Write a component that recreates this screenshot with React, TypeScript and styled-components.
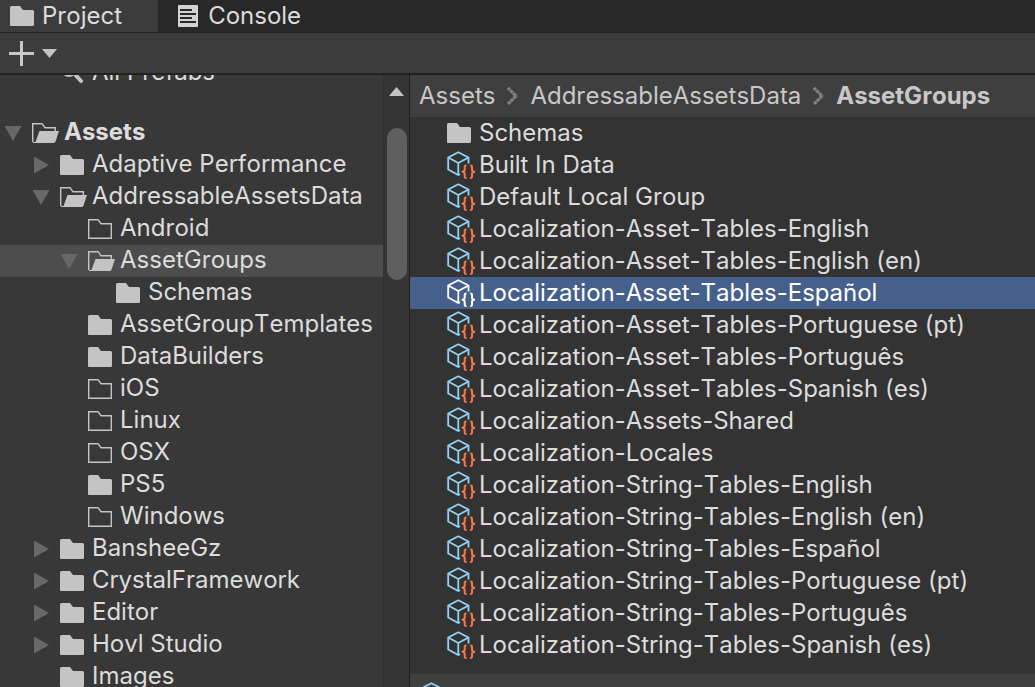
import React from "react";
import styled, { createGlobalStyle } from "styled-components";

const GlobalStyle = createGlobalStyle`
  *, *::before, *::after { box-sizing: border-box; }
  body {
    margin: 0;
    background: #383838;
    color: #dcdcdc;
    font-family: Inter, "Liberation Sans", sans-serif;
    font-size: 24px;
    font-weight: 400;
    line-height: 32px;
    font-optical-sizing: none;
    font-kerning: none;
  }
  button { font: inherit; font-optical-sizing: none; font-kerning: none; color: inherit; border: 0; padding: 0; background: none; text-align: left; }
  ul { list-style: none; margin: 0; padding: 0; }
  svg { display: block; flex: none; }
`;

const Window = styled.div`
  height: 100vh;
  display: flex;
  flex-direction: column;
  overflow: hidden;
`;

const TabBar = styled.div`
  flex: none;
  display: flex;
  height: 33px;
  background: #282828;
  border-bottom: 1px solid #242424;
`;

const Tab = styled.button<{ $active?: boolean }>`
  display: flex;
  align-items: center;
  gap: ${(p) => (p.$active ? 8 : 10)}px;
  padding: 0 36px 0 ${(p) => (p.$active ? 10 : 20)}px;
  background: ${(p) => (p.$active ? "#3c3c3c" : "transparent")};
`;

const Toolbar = styled.div`
  flex: none;
  display: flex;
  align-items: center;
  height: 42px;
  padding: 0 9px;
  background: #3c3c3c;
  border-bottom: 2px solid #212121;
`;

const AddButton = styled.button`
  display: flex;
  align-items: center;
  gap: 8px;
`;

const Panels = styled.div`
  flex: 1;
  min-height: 0;
  display: grid;
  grid-template-columns: 383px 27px minmax(0, 1fr);
`;

const TreePanel = styled.nav`
  overflow: hidden;
`;

const SavedSearches = styled.ul`
  margin-top: -18px;
  padding-bottom: 28px;
`;

const TreeRow = styled.button<{ $depth: number; $selected?: boolean; $strong?: boolean }>`
  display: flex;
  align-items: center;
  width: 100%;
  height: 32px;
  padding-left: ${(p) => p.$depth * 28 + 4}px;
  padding-bottom: 2px;
  background: ${(p) => (p.$selected ? "#4d4d4d" : "transparent")};
  font-weight: ${(p) => (p.$strong ? 700 : 400)};
  white-space: nowrap;
`;

const ArrowSlot = styled.span`
  flex: none;
  width: 28px;
  padding-top: 2px;
`;

const IconSlot = styled.span`
  flex: none;
  width: 32px;
  padding-top: 2px;
`;

const ScrollTrack = styled.div`
  display: flex;
  flex-direction: column;
  align-items: center;
  gap: 32px;
  padding-top: 12px;
  background: #353535;
  border-left: 1px solid #323232;
  border-right: 1px solid #1f1f1f;
`;

const ScrollThumb = styled.div`
  width: 20px;
  height: 152px;
  border-radius: 10px;
  background: #5f5f5f;
`;

const ListPanel = styled.main`
  display: flex;
  flex-direction: column;
  min-height: 0;
  overflow: hidden;
  background: #333333;
`;

const Breadcrumb = styled.nav`
  flex: none;
  display: flex;
  align-items: center;
  gap: 11px;
  height: 42px;
  padding-left: 9px;
  background: #3f3f3f;
  color: #c8c8c8;
  white-space: nowrap;
`;

const Crumb = styled.a<{ $current?: boolean }>`
  color: inherit;
  text-decoration: none;
  font-weight: ${(p) => (p.$current ? 700 : 400)};
`;

const FileList = styled.ul`
  flex: none;
`;

const FileRow = styled.button<{ $selected?: boolean }>`
  display: flex;
  align-items: center;
  width: 100%;
  height: 32px;
  padding-left: 37px;
  gap: 3px;
  background: ${(p) => (p.$selected ? "#46608c" : "transparent")};
  color: ${(p) => (p.$selected ? "#ffffff" : "inherit")};
  white-space: nowrap;
`;

const FileIcon = styled.span`
  flex: none;
  width: 29px;
`;

const StatusBar = styled.footer`
  flex: none;
  display: flex;
  align-items: center;
  gap: 3px;
  height: 44px;
  margin-top: 13px;
  padding-left: 10px;
  background: #3f3f3f;
  white-space: nowrap;
`;

const StatusPath = styled.span`
  padding-top: 2px;
`;

type FolderKind = "full" | "empty" | "open";

function Folder({ kind }: { kind: FolderKind }) {
  if (kind === "full") {
    return (
      <svg width="24" height="20" viewBox="0 0 24 20" fill="#c4c4c4">
        <path d="M0 19V1.500Q0 0 1.500 0H10L13 4H22.500Q24 4 24 5.500V18.500Q24 20 22.500 20H1Q0 20 0 19Z" />
      </svg>
    );
  }
  if (kind === "empty") {
    return (
      <svg width="24" height="20" viewBox="0 0 24 20" fill="none" stroke="#c4c4c4" strokeWidth="1.4">
        <path d="M.7 19.300V.7H10L13 4.700H23.300V19.300Z" />
      </svg>
    );
  }
  return (
    <svg width="28" height="20" viewBox="0 0 28 20">
      <path d="M.7 19V.7H10L13 4.700H23.300V8" fill="none" stroke="#c4c4c4" strokeWidth="1.4" />
      <path d="M7.500 8H27L23.500 18.500Q23 20 21.500 20H1V19H3.500Z" fill="#c4c4c4" />
    </svg>
  );
}

function AssetIcon({ selected }: { selected?: boolean }) {
  const cube = selected ? "#ffffff" : "#8fd3f7";
  const braces = selected ? "#ffffff" : "#ff7548";
  return (
    <svg width="29" height="28" viewBox="0 0 29 28" fill="none" strokeLinejoin="round">
      <path d="M21.500 12.500V6.500L11.300 1.200 1.200 6.500V18.500L11.300 24 13 23.200M1.200 6.500 11.300 12 21.500 6.500M11.300 12V24" stroke={cube} strokeWidth="1.800" />
      <path d="M19.500 14.500H19.200Q17.700 14.500 17.700 16V18.500Q17.700 20.500 15.500 20.700 17.700 20.900 17.700 23V25.500Q17.700 27 19.200 27H19.500M23.200 14.500H23.500Q25 14.500 25 16V18.500Q25 20.500 27.200 20.700 25 20.900 25 23V25.500Q25 27 23.500 27H23.200" stroke={braces} strokeWidth="2" />
    </svg>
  );
}

function Arrow({ open }: { open: boolean }) {
  return (
    <svg width="18" height="18" viewBox="0 0 18 18" fill="#686868">
      <path d={open ? "M.5 2H17.500L9 17Z" : "M2 .5V17.500L17 9Z"} />
    </svg>
  );
}

function Chevron() {
  return (
    <svg width="13" height="18" viewBox="0 0 13 18" fill="none" stroke="#858585" strokeWidth="3">
      <path d="M2 1 10 9 2 17" stroke="#6c6c6c" />
      <path d="M2 1 10 9 2 17" strokeDasharray="2 2" />
    </svg>
  );
}

interface TreeItem {
  name: string;
  depth: number;
  icon: FolderKind;
  expanded?: boolean;
  selected?: boolean;
}

const tree: TreeItem[] = [
  { name: "Assets", depth: 0, icon: "open", expanded: true },
  { name: "Adaptive Performance", depth: 1, icon: "full", expanded: false },
  { name: "AddressableAssetsData", depth: 1, icon: "open", expanded: true },
  { name: "Android", depth: 2, icon: "empty" },
  { name: "AssetGroups", depth: 2, icon: "open", expanded: true, selected: true },
  { name: "Schemas", depth: 3, icon: "full" },
  { name: "AssetGroupTemplates", depth: 2, icon: "full" },
  { name: "DataBuilders", depth: 2, icon: "full" },
  { name: "iOS", depth: 2, icon: "empty" },
  { name: "Linux", depth: 2, icon: "empty" },
  { name: "OSX", depth: 2, icon: "empty" },
  { name: "PS5", depth: 2, icon: "full" },
  { name: "Windows", depth: 2, icon: "empty" },
  { name: "BansheeGz", depth: 1, icon: "full", expanded: false },
  { name: "CrystalFramework", depth: 1, icon: "full", expanded: false },
  { name: "Editor", depth: 1, icon: "full", expanded: false },
  { name: "Hovl Studio", depth: 1, icon: "full", expanded: false },
  { name: "Images", depth: 1, icon: "full" },
];

const selectedFile = "Localization-Asset-Tables-Español";

const files = [
  "Built In Data",
  "Default Local Group",
  "Localization-Asset-Tables-English",
  "Localization-Asset-Tables-English (en)",
  selectedFile,
  "Localization-Asset-Tables-Portuguese (pt)",
  "Localization-Asset-Tables-Português",
  "Localization-Asset-Tables-Spanish (es)",
  "Localization-Assets-Shared",
  "Localization-Locales",
  "Localization-String-Tables-English",
  "Localization-String-Tables-English (en)",
  "Localization-String-Tables-Español",
  "Localization-String-Tables-Portuguese (pt)",
  "Localization-String-Tables-Português",
  "Localization-String-Tables-Spanish (es)",
];

export default function App() {
  return (
    <Window>
      <GlobalStyle />
      <TabBar>
        <Tab $active>
          <Folder kind="full" />
          Project
        </Tab>
        <Tab>
          <svg width="20" height="22" viewBox="0 0 20 22">
            <rect width="20" height="22" rx="1" fill="#d2d2d2" />
            <path d="M2 5H14M2 9H18M2 13H14M2 17H18" stroke="#282828" strokeWidth="2" />
          </svg>
          Console
        </Tab>
      </TabBar>
      <Toolbar>
        <AddButton aria-label="Create">
          <svg width="25" height="25" viewBox="0 0 25 25" stroke="#c8c8c8" strokeWidth="3">
            <path d="M12.500 0V25M0 12.500H25" />
          </svg>
          <svg width="15" height="9" viewBox="0 0 15 9" fill="#c4c4c4">
            <path d="M0 0H15L7.500 9Z" />
          </svg>
        </AddButton>
      </Toolbar>
      <Panels>
        <TreePanel aria-label="Folders">
          <SavedSearches>
            <li>
              <TreeRow $depth={1}>
                <ArrowSlot />
                <IconSlot>
                  <svg width="24" height="24" viewBox="0 0 24 24" fill="none" stroke="#c4c4c4">
                    <circle cx="9" cy="8" r="7" strokeWidth="2" />
                    <path d="M16 14.500 21 20" strokeWidth="4" strokeLinecap="round" />
                  </svg>
                </IconSlot>
                All Prefabs
              </TreeRow>
            </li>
          </SavedSearches>
          <ul>
            {tree.map((item, i) => (
              <li key={i}>
                <TreeRow $depth={item.depth} $selected={item.selected} $strong={item.depth === 0}>
                  <ArrowSlot>{item.expanded !== undefined && <Arrow open={item.expanded} />}</ArrowSlot>
                  <IconSlot>
                    <Folder kind={item.icon} />
                  </IconSlot>
                  {item.name}
                </TreeRow>
              </li>
            ))}
          </ul>
        </TreePanel>
        <ScrollTrack>
          <svg width="15" height="9" viewBox="0 0 15 9" fill="#c4c4c4">
            <path d="M0 9H15L7.500 0Z" />
          </svg>
          <ScrollThumb />
        </ScrollTrack>
        <ListPanel>
          <Breadcrumb aria-label="Path">
            <Crumb href="#assets">Assets</Crumb>
            <Chevron />
            <Crumb href="#data">AddressableAssetsData</Crumb>
            <Chevron />
            <Crumb href="#groups" $current>AssetGroups</Crumb>
          </Breadcrumb>
          <FileList>
            <li>
              <FileRow>
                <FileIcon>
                  <Folder kind="full" />
                </FileIcon>
                Schemas
              </FileRow>
            </li>
            {files.map((name) => (
              <li key={name}>
                <FileRow $selected={name === selectedFile}>
                  <FileIcon>
                    <AssetIcon selected={name === selectedFile} />
                  </FileIcon>
                  {name}
                </FileRow>
              </li>
            ))}
          </FileList>
          <StatusBar>
            <FileIcon>
              <AssetIcon />
            </FileIcon>
            <StatusPath>Assets/AddressableAssetsData/AssetGroups/{selectedFile}.asset</StatusPath>
          </StatusBar>
        </ListPanel>
      </Panels>
    </Window>
  );
}
